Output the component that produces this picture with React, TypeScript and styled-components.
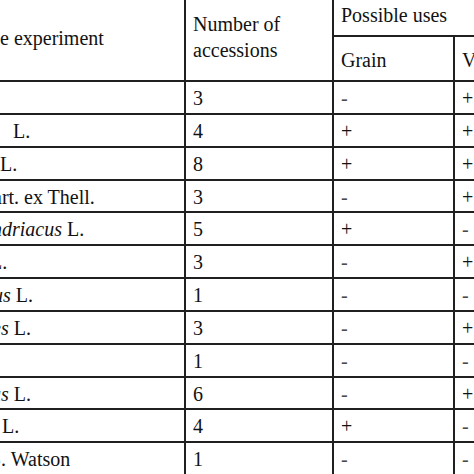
import React from 'react';
import styled, { createGlobalStyle } from 'styled-components';

const GlobalStyle = createGlobalStyle`
  html, body {
    margin: 0;
    padding: 0;
    background: #ffffff;
  }
  body {
    font-family: "Liberation Serif", "Times New Roman", serif;
    color: #121212;
  }
`;

type Part = { t: string; i?: boolean };
type Row = {
  indent: number;
  species: Part[];
  accessions: number;
  grain: string;
  vegetable: string;
};

// the table is cropped on the left: indent places the visible tail of each name
const rows: Row[] = [
  { indent: 0, species: [], accessions: 3, grain: '-', vegetable: '+' },
  { indent: 13, species: [{ t: 'L.' }], accessions: 4, grain: '+', vegetable: '+' },
  { indent: 0, species: [{ t: 'L.' }], accessions: 8, grain: '+', vegetable: '+' },
  { indent: -7, species: [{ t: 'art. ex Thell.' }], accessions: 3, grain: '-', vegetable: '+' },
  { indent: -8, species: [{ t: 'ndriacus', i: true }, { t: ' L.' }], accessions: 5, grain: '+', vegetable: '-' },
  { indent: -10, species: [{ t: 'L.' }], accessions: 3, grain: '-', vegetable: '+' },
  { indent: -7, species: [{ t: 'us', i: true }, { t: ' L.' }], accessions: 1, grain: '-', vegetable: '-' },
  { indent: -8, species: [{ t: 'es', i: true }, { t: ' L.' }], accessions: 3, grain: '-', vegetable: '+' },
  { indent: 0, species: [], accessions: 1, grain: '-', vegetable: '-' },
  { indent: -9, species: [{ t: 'us', i: true }, { t: ' L.' }], accessions: 6, grain: '-', vegetable: '+' },
  { indent: 2, species: [{ t: 'L.' }], accessions: 4, grain: '+', vegetable: '-' },
  { indent: -10, species: [{ t: 'S. Watson' }], accessions: 1, grain: '-', vegetable: '-' },
];

const Page = styled.div`
  width: 474px;
  height: 474px;
  overflow: hidden;
  background: #ffffff;
`;

const Grid = styled.div`
  display: grid;
  grid-template-columns: 184px 146px 119px 60px;
  grid-template-rows: 35px 43px repeat(12, 30.85px);
  gap: 2px;
  background: #202020;
  width: max-content;
  font-size: 20px;
`;

const HeadCell = styled.div<{ $rows?: number; $cols?: number; $top: number; $pad?: number }>`
  background: #ffffff;
  grid-row: span ${(p) => p.$rows ?? 1};
  grid-column: span ${(p) => p.$cols ?? 1};
  padding: ${(p) => p.$top}px 0 0 ${(p) => p.$pad ?? 7}px;
  line-height: 26px;
  white-space: nowrap;
`;

const Cell = styled.div`
  background: #ffffff;
  padding: 3px 0 0 7px;
  line-height: 26px;
  white-space: nowrap;
`;

const SpeciesCell = styled(Cell)<{ $indent: number }>`
  padding-left: 0;
  text-indent: ${(p) => p.$indent}px;
`;

const Sign = styled(Cell)<{ $minus: boolean }>`
  color: ${(p) => (p.$minus ? '#4a4a4a' : '#121212')};
`;

const Italic = styled.i`
  font-style: italic;
`;

export default function App() {
  return (
    <Page>
      <GlobalStyle />
      <Grid>
        <HeadCell $rows={2} $top={25} $pad={0}>
          e experiment
        </HeadCell>
        <HeadCell $rows={2} $top={11}>
          Number of
          <br />
          accessions
        </HeadCell>
        <HeadCell $cols={2} $top={2}>
          Possible uses
        </HeadCell>
        <HeadCell $top={10}>Grain</HeadCell>
        <HeadCell $top={10}>Vegetable</HeadCell>
        {rows.map((r, idx) => (
          <React.Fragment key={idx}>
            <SpeciesCell $indent={r.indent}>
              {r.species.map((p, j) => (p.i ? <Italic key={j}>{p.t}</Italic> : <span key={j}>{p.t}</span>))}
            </SpeciesCell>
            <Cell>{r.accessions}</Cell>
            <Sign $minus={r.grain === '-'}>{r.grain}</Sign>
            <Sign $minus={r.vegetable === '-'}>{r.vegetable}</Sign>
          </React.Fragment>
        ))}
      </Grid>
    </Page>
  );
}
